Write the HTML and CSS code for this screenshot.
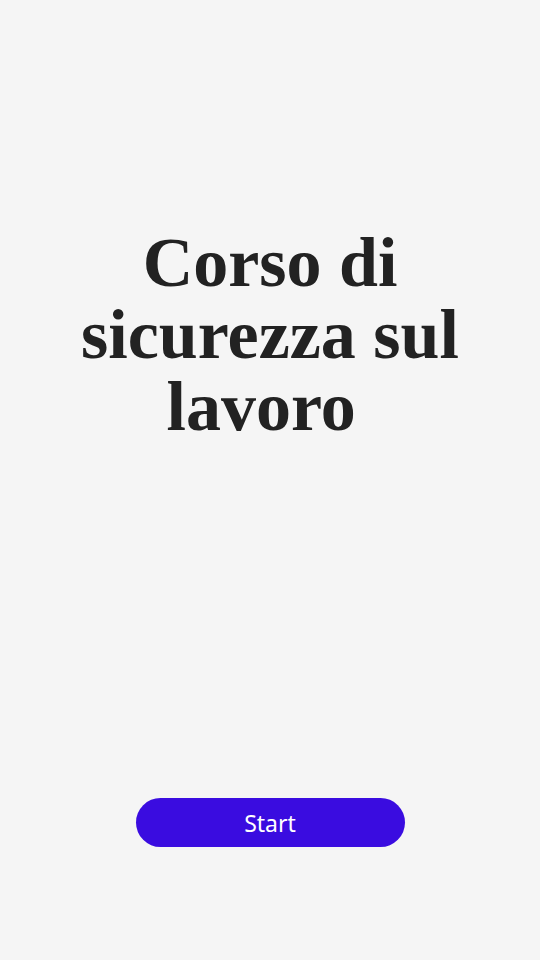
FILE: index.html
```html
<!DOCTYPE html>
<html lang="it">
<head>
    <meta charset="UTF-8">
    <title>Corso di sicurezza sul lavoro</title>
    <link rel="stylesheet" href="styles.css">
</head>
<body>
    <main class="screen">
        <div class="intro">
            <h1 class="title">Corso di sicurezza sul lavoro&nbsp;</h1>
        </div>
        <button class="start-btn">Start</button>
    </main>
</body>
</html>
```
FILE: styles.css
```css
html, body {
    margin: 0;
    height: 100%;
}

body {
    background-color: #f5f5f5;
    color: #222;
}

.screen {
    height: 100%;
    display: flex;
    flex-direction: column;
    align-items: center;
}

.intro {
    flex: 1;
    display: flex;
    align-items: flex-start;
    justify-content: center;
    padding: 227px 60px 0;
}

.title {
    margin: 0;
    font-family: "Liberation Serif", serif;
    font-weight: bold;
    font-size: 70px;
    line-height: 72px;
    text-align: center;
    max-width: 400px;
}

.start-btn {
    width: 269px;
    height: 49px;
    margin-bottom: 113px;
    border: none;
    border-radius: 25px;
    background-color: #3a0ce0;
    color: #fff;
    font-family: "Noto Sans", sans-serif;
    font-size: 23px;
    cursor: pointer;
}
```
